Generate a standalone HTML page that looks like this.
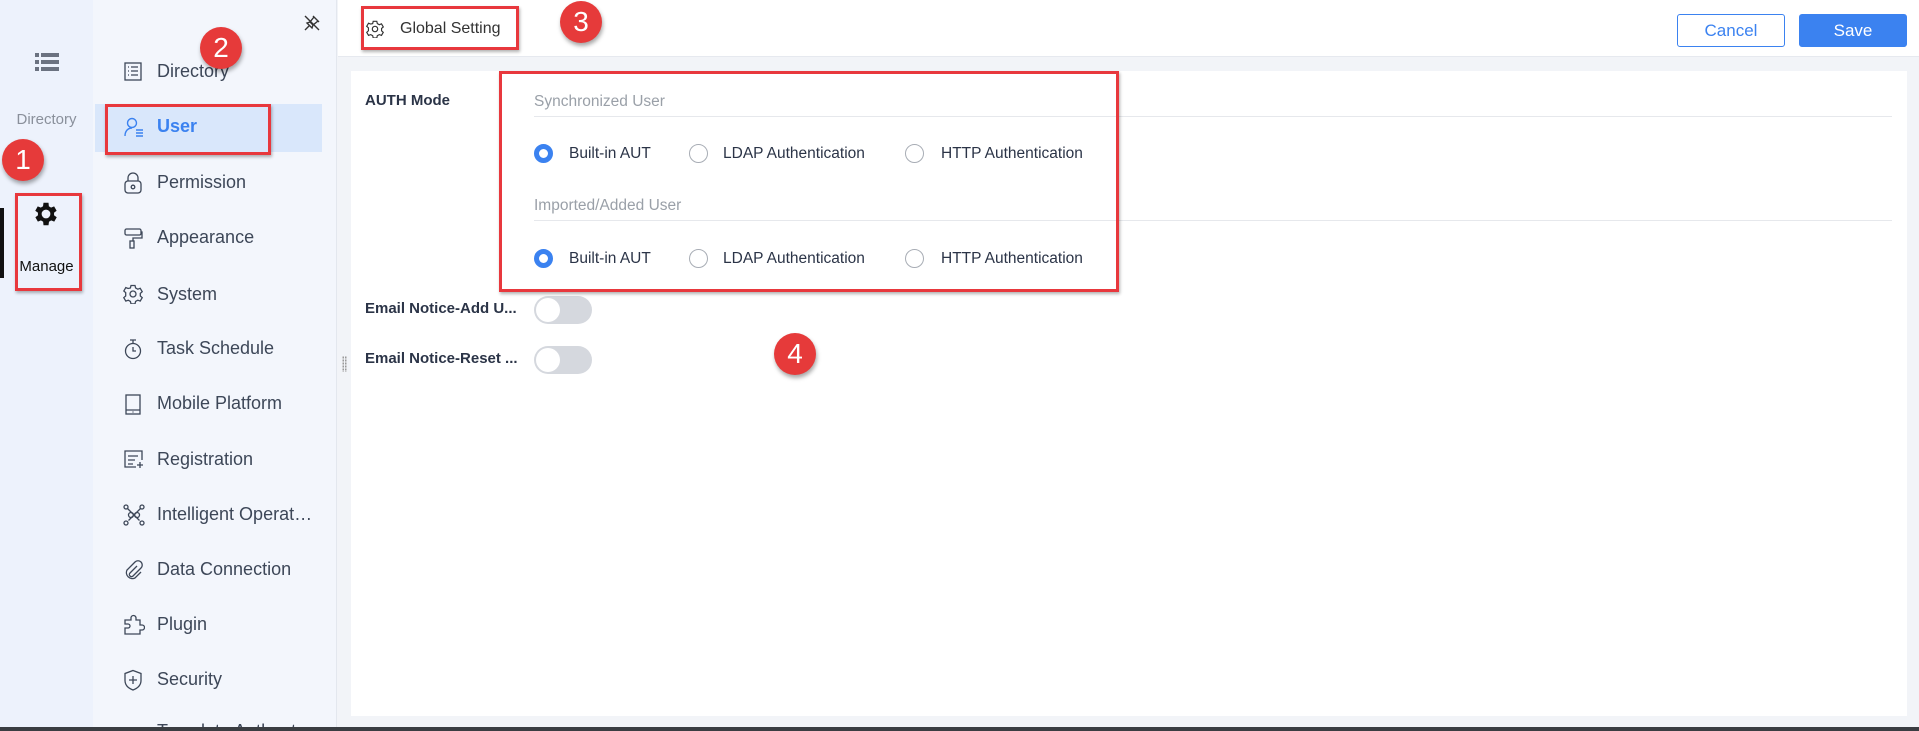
<!DOCTYPE html>
<html><head><meta charset="utf-8"><style>
*{box-sizing:border-box;margin:0;padding:0}
html{width:1919px;height:731px;overflow:hidden}
body{width:1919px;height:731px;overflow:hidden;background:#f2f4f8;font-family:"Liberation Sans",sans-serif;position:relative;color:#2b3447}
.abs{position:absolute}
.rail{left:0;top:0;width:93px;height:728px;background:#edf2fc}
.side{left:93px;top:0;width:244px;height:727px;background:#f3f6fc;border-right:1px solid #e3e7ee;overflow:hidden}
.hdr{left:338px;top:0;width:1581px;height:57px;background:#fff;border-bottom:1px solid #e6e9ef}
.card{left:351px;top:71px;width:1556px;height:645px;background:#fff}
.mi{position:absolute;left:0;width:244px;height:30px;font-size:18px;color:#3d4758;line-height:30px}
.mi span{position:absolute;left:64px}
.mi svg{position:absolute;left:30px;top:5px}
.rb{position:absolute;border:3px solid #e8383d;box-shadow:1px 2px 3px rgba(0,0,0,.3)}
.num{position:absolute;width:42px;height:42px;border-radius:50%;background:#e63a3a;color:#fff;font-size:28px;text-align:center;line-height:42px;box-shadow:1px 3px 4px rgba(0,0,0,.35)}
.t15{font-size:15.5px;position:absolute}
.radio{position:absolute;width:19px;height:19px;border-radius:50%;border:1.5px solid #a8adb5;background:#fff}
.radio.on{border:5px solid #3b82f0}
.tog{position:absolute;width:58px;height:28px;border-radius:14px;background:#d5d8de}
.tog::after{content:"";position:absolute;left:2px;top:2px;width:24px;height:24px;border-radius:50%;background:#fff}
</style></head><body>
<div class="abs rail"></div>
<div class="abs hdr"></div>
<div class="abs card"></div>

<svg class="abs" style="left:35px;top:52px" width="24" height="20" viewBox="0 0 24 20"><g fill="#6b7280"><rect x="0" y="1" width="4" height="4"/><rect x="6" y="1" width="18" height="4"/><rect x="0" y="8" width="4" height="4"/><rect x="6" y="8" width="18" height="4"/><rect x="0" y="15" width="4" height="4"/><rect x="6" y="15" width="18" height="4"/></g></svg>
<div class="abs" style="left:0;width:93px;top:111px;text-align:center;font-size:15px;color:#8a909b">Directory</div>
<div class="abs" style="left:0;top:208px;width:4px;height:70px;background:#111"></div>
<svg class="abs" style="left:31px;top:199px" width="30" height="30" viewBox="0 0 24 24"><path fill="#111" d="M19.4 13a7.5 7.5 0 000-2l2.1-1.6-2-3.5-2.5 1a7 7 0 00-1.7-1L15 3h-4l-.4 2.9a7 7 0 00-1.7 1l-2.5-1-2 3.5L6.6 11a7.5 7.5 0 000 2l-2.1 1.6 2 3.5 2.5-1a7 7 0 001.7 1L11 21h4l.4-2.9a7 7 0 001.7-1l2.5 1 2-3.5zM13 15.5a3.5 3.5 0 110-7 3.5 3.5 0 010 7z" transform="translate(-1 0)"/></svg>
<div class="abs" style="left:0;width:93px;top:258px;text-align:center;font-size:15px;color:#111">Manage</div>

<div class="abs side">
<svg class="abs" style="left:210px;top:14px" width="18" height="18" viewBox="0 0 18 18" fill="none" stroke="#333" stroke-width="1.4"><path d="M10 2l6 6M11 3l-4 5 3 3 5-4M7 8l-3 1 5 5 1-3M6 12l-4 4M2 2l14 14"/></svg>
<div class="abs" style="left:2px;top:104px;width:227px;height:48px;background:#d9e7fb"></div>
<div class="mi" style="top:56px"><svg width="20" height="20" viewBox="0 0 20 20" fill="none" stroke="#3d4758" stroke-width="1.3"><rect x="2" y="2" width="16" height="17"/><path d="M5 6h1M8 6h7M5 10h1M8 10h7M5 14h1M8 14h7"/></svg><span>Directory</span></div>
<div class="mi" style="top:111px;color:#3b82f0;font-weight:bold"><svg width="22" height="22" viewBox="0 0 22 22" fill="none" stroke="#3b82f0" stroke-width="1.4"><circle cx="9" cy="7" r="4.5"/><path d="M2 20c0-5 3-8 7-8M13 14h7M13 17h7M13 20h7"/></svg><span>User</span></div>
<div class="mi" style="top:167px"><svg width="20" height="22" viewBox="0 0 20 22" fill="none" stroke="#3d4758" stroke-width="1.3"><path d="M5 9V6a5 5 0 0110 0v3"/><rect x="2" y="9" width="16" height="12" rx="3"/><circle cx="10" cy="15" r="1.8"/></svg><span>Permission</span></div>
<div class="mi" style="top:222px"><svg width="20" height="22" viewBox="0 0 20 22" fill="none" stroke="#3d4758" stroke-width="1.3"><rect x="2" y="2" width="16" height="6" rx="1.5"/><path d="M18 5h1v6h-9v3"/><rect x="7" y="14" width="4" height="7"/></svg><span>Appearance</span></div>
<div class="mi" style="top:279px"><svg width="20" height="20" viewBox="0 0 20 20" fill="none" stroke="#3d4758" stroke-width="1.3"><path d="M8 1.5h4l.6 2.5 2.2 1.2 2.4-.9 2 3.4-1.9 1.7v2.6l1.9 1.7-2 3.4-2.4-.9-2.2 1.2-.6 2.5H8l-.6-2.5-2.2-1.2-2.4.9-2-3.4 1.9-1.7V8.7L.8 7l2-3.4 2.4.9L7.4 4z"/><circle cx="10" cy="10" r="3"/></svg><span>System</span></div>
<div class="mi" style="top:333px"><svg width="20" height="22" viewBox="0 0 20 22" fill="none" stroke="#3d4758" stroke-width="1.3"><circle cx="10" cy="13" r="7.5"/><path d="M7 2h6M10 2v3M10 9v4h3"/></svg><span>Task Schedule</span></div>
<div class="mi" style="top:388px"><svg width="20" height="22" viewBox="0 0 20 22" fill="none" stroke="#3d4758" stroke-width="1.3"><rect x="3" y="2" width="14" height="19"/><path d="M3 17h14M10 18.5v1"/></svg><span>Mobile Platform</span></div>
<div class="mi" style="top:444px"><svg width="22" height="20" viewBox="0 0 22 20" fill="none" stroke="#3d4758" stroke-width="1.3"><path d="M13 18H2V2h17v9M5 7h10M5 11h7M5 15h5M17 13v6M14 16h6"/></svg><span>Registration</span></div>
<div class="mi" style="top:499px"><svg width="22" height="22" viewBox="0 0 22 22" fill="none" stroke="#3d4758" stroke-width="1.3"><circle cx="3" cy="3" r="2"/><circle cx="19" cy="3" r="2"/><circle cx="3" cy="19" r="2"/><circle cx="19" cy="19" r="2"/><circle cx="8" cy="11" r="2.5"/><circle cx="14" cy="11" r="2.5"/><path d="M4.5 4.5l12 12M17.5 4.5l-12 12"/></svg><span>Intelligent Operat…</span></div>
<div class="mi" style="top:554px"><svg width="20" height="22" viewBox="0 0 20 22" fill="none" stroke="#3d4758" stroke-width="1.3"><path d="M14 7l-7 7a2 2 0 003 3l8-8a4 4 0 00-6-6l-8 8a6 6 0 008 8l6-6"/></svg><span>Data Connection</span></div>
<div class="mi" style="top:609px"><svg width="22" height="22" viewBox="0 0 22 22" fill="none" stroke="#3d4758" stroke-width="1.3"><path d="M2 20v-6h3a2 2 0 000-4H2V6h6V4a2.5 2.5 0 015 0v2h4v5h2a2.5 2.5 0 010 5h-2v4z"/></svg><span>Plugin</span></div>
<div class="mi" style="top:664px"><svg width="20" height="22" viewBox="0 0 20 22" fill="none" stroke="#3d4758" stroke-width="1.3"><path d="M10 1.5l8 3v7c0 5-4 8-8 9.5-4-1.5-8-4.5-8-9.5v-7z"/><path d="M10 7v8M6 11h8"/></svg><span>Security</span></div>
<div class="mi" style="top:716px"><span>Template Authent…</span></div>
</div>
<div class="abs" style="left:0;top:727px;width:1919px;height:4px;background:#3a3d42"></div>

<svg class="abs" style="left:366px;top:20px" width="18" height="18" viewBox="0 0 20 20" fill="none" stroke="#333" stroke-width="1.3"><path d="M8 1.5h4l.6 2.5 2.2 1.2 2.4-.9 2 3.4-1.9 1.7v2.6l1.9 1.7-2 3.4-2.4-.9-2.2 1.2-.6 2.5H8l-.6-2.5-2.2-1.2-2.4.9-2-3.4 1.9-1.7V8.7L.8 7l2-3.4 2.4.9L7.4 4z"/><circle cx="10" cy="10" r="3"/></svg>
<div class="abs" style="left:400px;top:20px;font-size:16px;color:#333">Global Setting</div>
<div class="abs" style="left:1677px;top:14px;width:108px;height:33px;border:1px solid #3b82f0;border-radius:3px;color:#3b82f0;font-size:17px;text-align:center;line-height:31px;background:#fff">Cancel</div>
<div class="abs" style="left:1799px;top:14px;width:108px;height:33px;background:#3b82f0;border-radius:3px;color:#fff;font-size:17px;text-align:center;line-height:33px">Save</div>

<div class="abs" style="left:365px;top:92px;font-size:15px;font-weight:bold;color:#2b3447">AUTH Mode</div>
<div class="t15" style="left:534px;top:93px;color:#9aa0a8">Synchronized User</div>
<div class="abs" style="left:534px;top:116px;width:1358px;height:1px;background:#e6e8ec"></div>
<div class="radio on" style="left:534px;top:144px"></div><div class="t15" style="left:569px;top:145px">Built-in AUT</div>
<div class="radio" style="left:689px;top:144px"></div><div class="t15" style="left:723px;top:145px">LDAP Authentication</div>
<div class="radio" style="left:905px;top:144px"></div><div class="t15" style="left:941px;top:145px">HTTP Authentication</div>
<div class="t15" style="left:534px;top:197px;color:#9aa0a8">Imported/Added User</div>
<div class="abs" style="left:534px;top:220px;width:1358px;height:1px;background:#e6e8ec"></div>
<div class="radio on" style="left:534px;top:249px"></div><div class="t15" style="left:569px;top:250px">Built-in AUT</div>
<div class="radio" style="left:689px;top:249px"></div><div class="t15" style="left:723px;top:250px">LDAP Authentication</div>
<div class="radio" style="left:905px;top:249px"></div><div class="t15" style="left:941px;top:250px">HTTP Authentication</div>
<div class="abs" style="left:365px;top:300px;font-size:15px;font-weight:bold">Email Notice-Add U...</div>
<div class="tog" style="left:534px;top:296px"></div>
<div class="abs" style="left:365px;top:350px;font-size:15px;font-weight:bold">Email Notice-Reset ...</div>
<div class="tog" style="left:534px;top:346px"></div>
<div class="abs" style="left:342px;top:356px;width:5px;height:16px;background-image:radial-gradient(#999 0.8px,transparent 1px);background-size:2.5px 3px"></div>

<div class="rb" style="left:15px;top:193px;width:67px;height:98px"></div>
<div class="rb" style="left:105px;top:104px;width:166px;height:51px"></div>
<div class="rb" style="left:361px;top:6px;width:158px;height:44px"></div>
<div class="rb" style="left:499px;top:71px;width:620px;height:221px"></div>
<div class="num" style="left:2px;top:139px">1</div>
<div class="num" style="left:200px;top:27px">2</div>
<div class="num" style="left:560px;top:1px">3</div>
<div class="num" style="left:774px;top:333px">4</div>
</body></html>
